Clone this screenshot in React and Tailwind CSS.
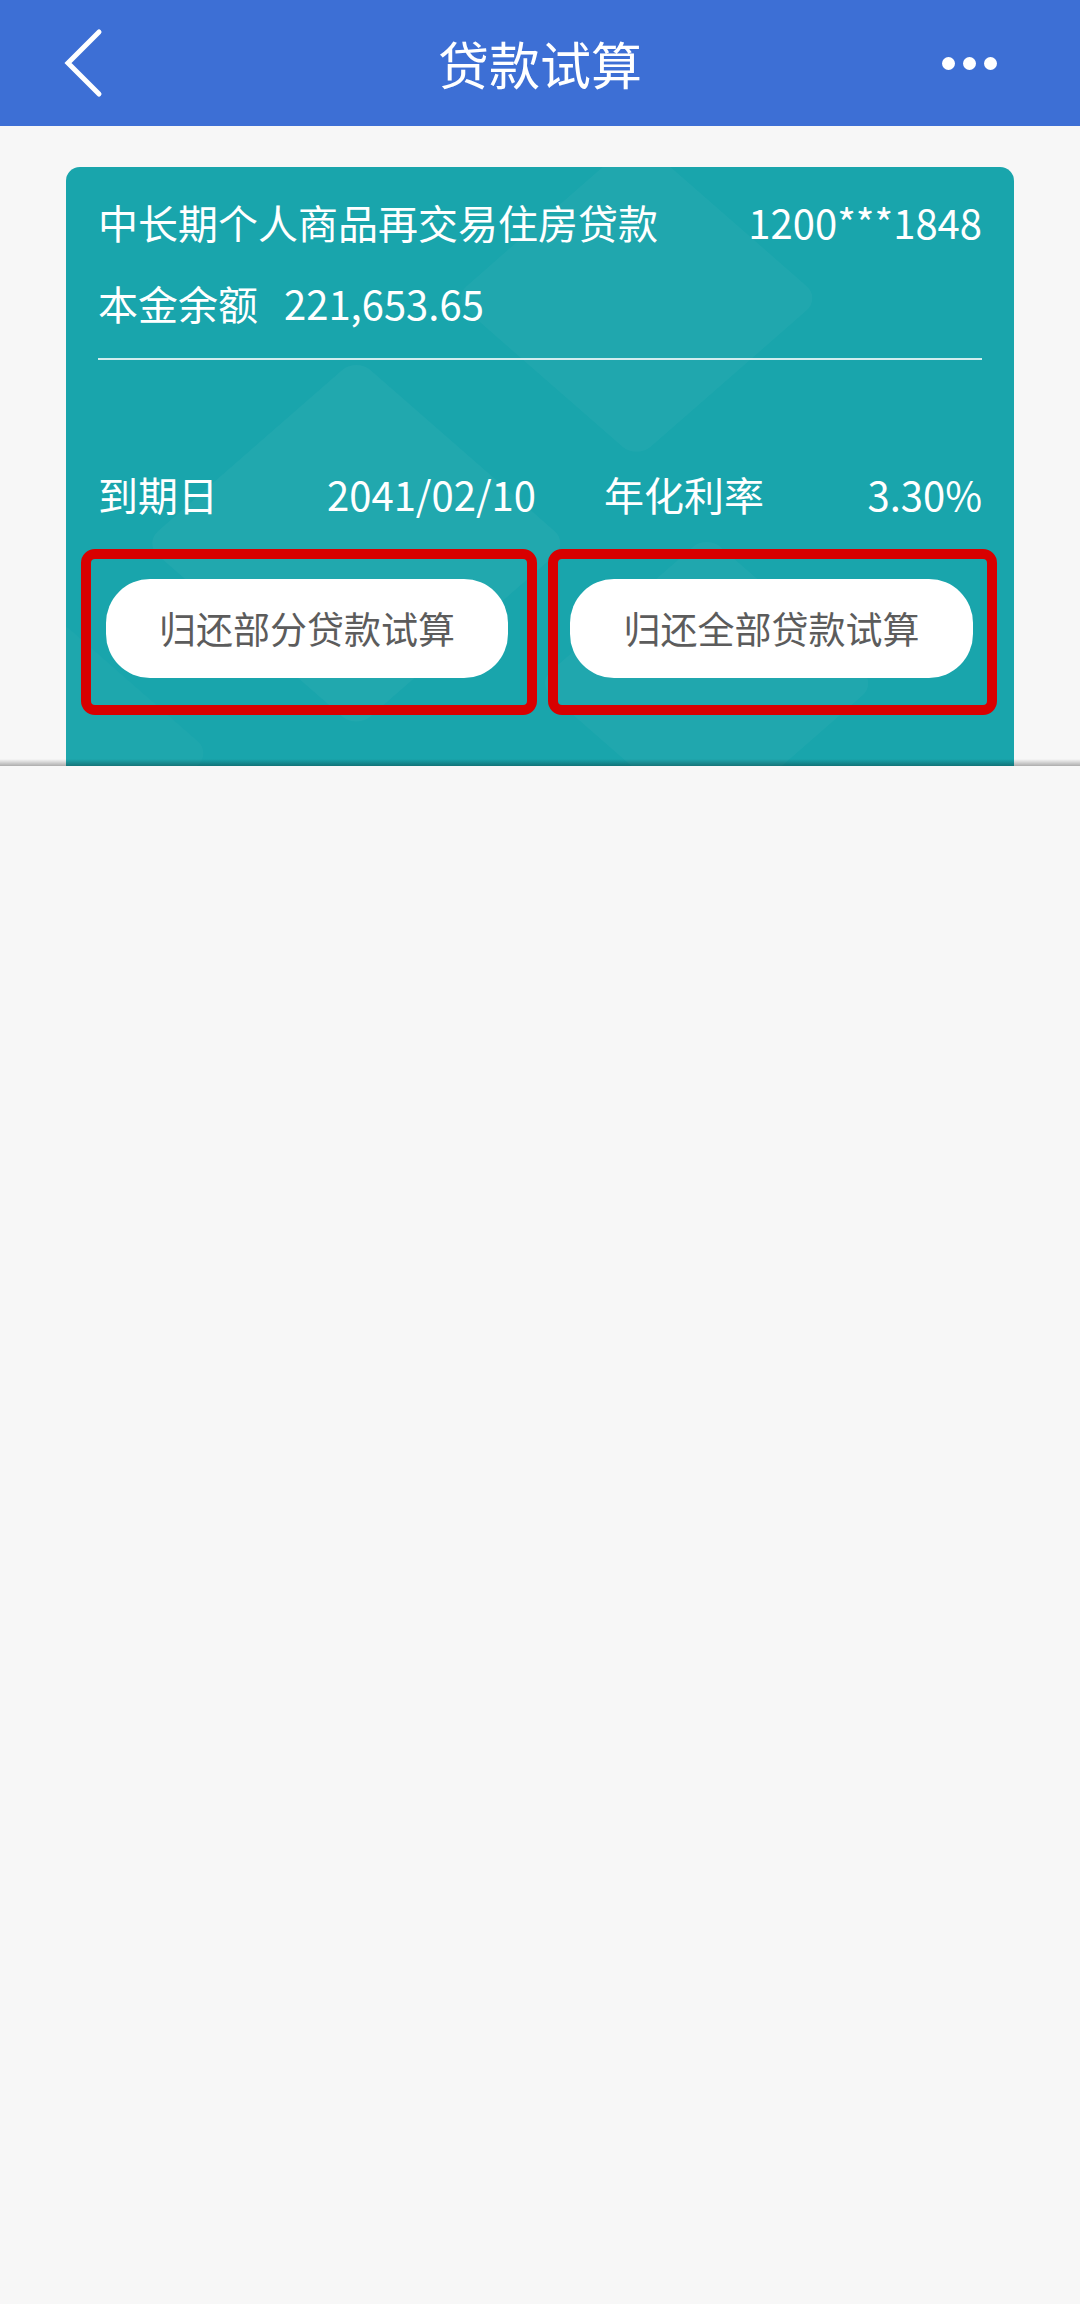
import React from 'react';

const font = { fontFamily: '"Noto Sans CJK SC", "Noto Sans", sans-serif' };

const CardPattern = () => (
    <svg className="absolute inset-0 w-full h-full" viewBox="0 0 947 800" preserveAspectRatio="none">
        <g fill="#ffffff">
            <rect x="140" y="280" width="300" height="300" rx="20" transform="rotate(45 290 430)" opacity="0.035" />
            <rect x="440" y="20" width="260" height="260" rx="20" transform="rotate(45 570 150)" opacity="0.03" />
            <rect x="520" y="470" width="240" height="240" rx="20" transform="rotate(45 640 590)" opacity="0.03" />
            <rect x="-120" y="560" width="220" height="220" rx="20" transform="rotate(45 -10 670)" opacity="0.025" />
        </g>
    </svg>
);

const CalcButton = ({ label, className }) => (
    <div className={`border-[10px] border-[#d80000] rounded-[14px] ${className}`}>
        <button className="w-full h-[99px] rounded-[44px] bg-white text-[37px] text-[#5c5c5c] flex items-center justify-center">
            {label}
        </button>
    </div>
);

export default function App() {
    return (
        <div className="w-[1080px] h-[2304px] flex flex-col bg-[#f7f7f7]" style={font}>
            {/* header */}
            <div className="h-[126px] shrink-0 bg-[#3d6fd5] flex items-center px-[62px] pr-[83px]">
                <div className="w-[180px]">
                    <svg width="44" height="70" viewBox="0 0 44 70" fill="none">
                        <path d="M37 4 L6 35 L37 66" stroke="#fff" strokeWidth="5" strokeLinecap="round" strokeLinejoin="miter" />
                    </svg>
                </div>
                <h1 className="flex-1 text-center text-[51px] text-white leading-none ml-[21px]">贷款试算</h1>
                <div className="w-[180px] flex items-center justify-end gap-[8px]">
                    <span className="w-[13px] h-[13px] rounded-full bg-white" />
                    <span className="w-[13px] h-[13px] rounded-full bg-white" />
                    <span className="w-[13px] h-[13px] rounded-full bg-white" />
                </div>
            </div>

            {/* scroll area */}
            <div className="relative h-[640px] shrink-0 overflow-hidden px-[66px] pt-[41px]">
                <div className="relative h-[700px] rounded-[14px] bg-[#19a5ac] overflow-hidden">
                    <CardPattern />
                    <div className="relative px-[32px] pt-[27px] text-white">
                        <div className="flex justify-between text-[40px] leading-[56px]">
                            <span>中长期个人商品再交易住房贷款</span>
                            <span>1200***1848</span>
                        </div>
                        <div className="mt-[25px] flex text-[40px] leading-[56px]">
                            <span>本金余额</span>
                            <span className="ml-[26px]">221,653.65</span>
                        </div>
                        <div className="mt-[27px] h-[2px] bg-white/80" />
                        <div className="mt-[106px] flex text-[40px] leading-[56px]">
                            <div className="w-[438px] flex justify-between">
                                <span>到期日</span>
                                <span>2041/02/10</span>
                            </div>
                            <div className="flex-1 ml-[68px] flex justify-between">
                                <span>年化利率</span>
                                <span>3.30%</span>
                            </div>
                        </div>
                        <div className="mt-[27px] -ml-[17px] -mr-[16px] flex gap-[11px]">
                            <CalcButton label="归还部分贷款试算" className="w-[456px] pl-[15px] pr-[19px] pt-[20px] pb-[27px]" />
                            <CalcButton label="归还全部贷款试算" className="w-[449px] pl-[12px] pr-[14px] pt-[20px] pb-[27px]" />
                        </div>
                    </div>
                </div>
                <div className="absolute left-0 right-0 bottom-0 h-[7px] bg-gradient-to-b from-black/0 to-black/30" />
            </div>

            <div className="flex-1 bg-[#f7f7f7]" />
        </div>
    );
}
